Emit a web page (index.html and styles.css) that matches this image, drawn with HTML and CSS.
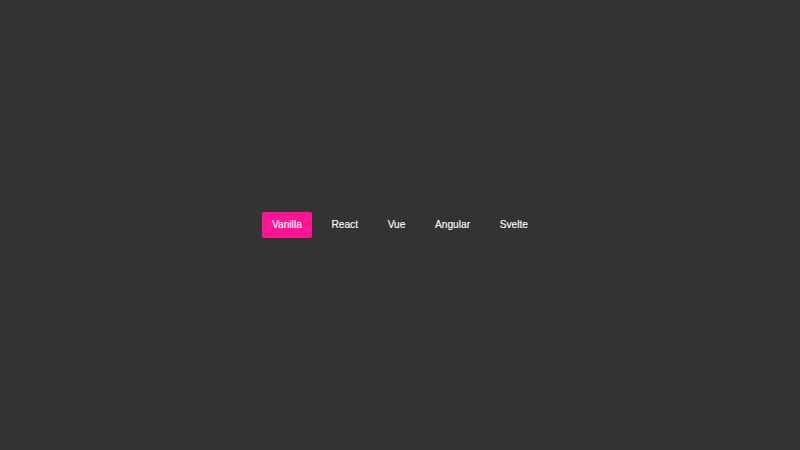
FILE: index.html
```html
<!DOCTYPE html>
<html lang="en">
<head>
<meta charset="utf-8">
<title>Tabs</title>
<link rel="stylesheet" href="styles.css">
</head>
<body>
<nav class="tabs">
  <button class="tab active">Vanilla</button>
  <button class="tab">React</button>
  <button class="tab">Vue</button>
  <button class="tab">Angular</button>
  <button class="tab">Svelte</button>
</nav>
</body>
</html>
```
FILE: styles.css
```css
html, body {
  margin: 0;
  height: 100%;
}
body {
  background: #333333;
  display: flex;
  align-items: center;
  justify-content: center;
  font-family: "Liberation Sans", Arial, sans-serif;
}
.tabs {
  display: flex;
  gap: 10px;
}
.tab {
  font-family: inherit;
  font-size: 10.2px;
  line-height: 12px;
  padding: 7px 9.8px;
  border: none;
  border-radius: 2px;
  background: transparent;
  color: #ffffff;
  -webkit-text-stroke: 0.12px currentColor;
  cursor: pointer;
}
.tab.active {
  background: #ff1493;
}
```
